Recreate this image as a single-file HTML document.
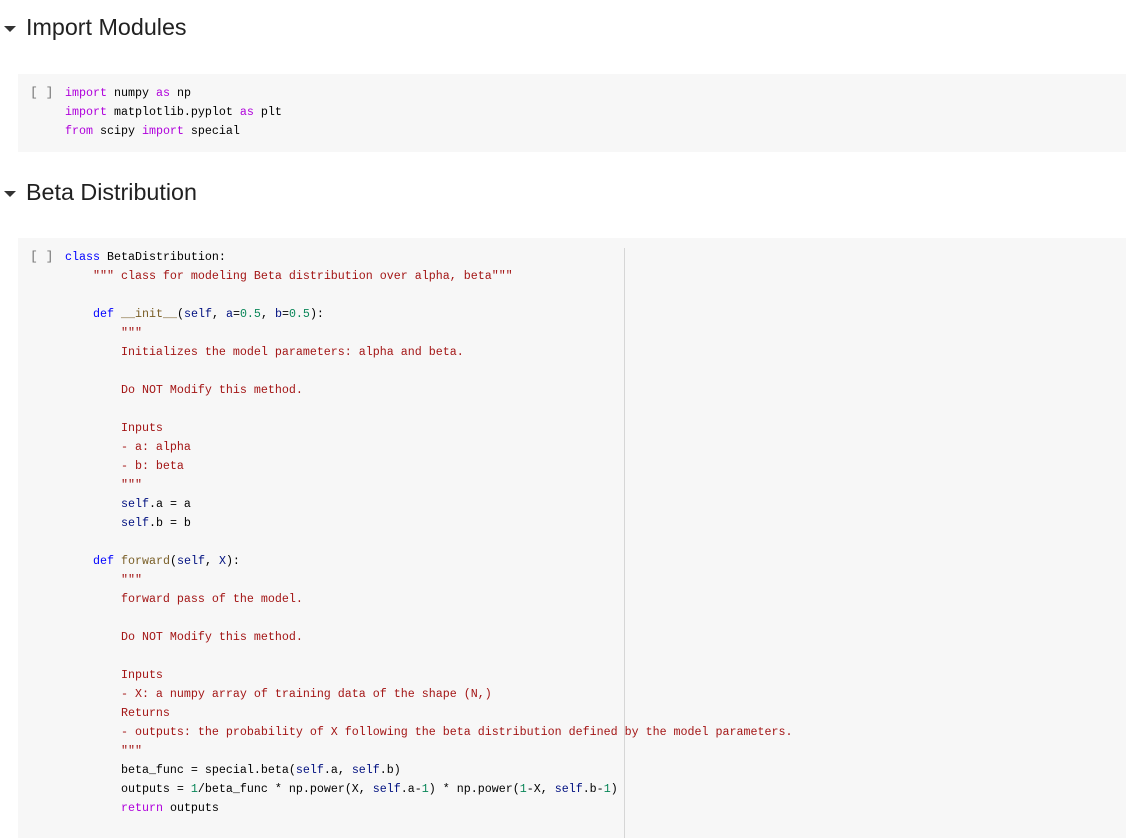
<!DOCTYPE html>
<html><head><style>
body{margin:0;width:1126px;height:831px;overflow:hidden;background:#fff;font-family:"Liberation Sans",sans-serif;}
.h{position:absolute;left:0;font-size:23.3px;color:#212121;}
.h .t{position:absolute;left:4px;top:12px;width:0;height:0;border-left:6px solid transparent;border-right:6px solid transparent;border-top:6px solid #333;}
.h span{position:absolute;left:26px;top:0;white-space:nowrap;}
.cell{position:absolute;left:18px;right:0;background:#f7f7f7;}
.br{position:absolute;left:12px;color:#757575;font:13px "Liberation Mono",monospace;}
pre{position:absolute;left:47px;margin:0;font:11.67px/19px "Liberation Mono",monospace;color:#000;}
.k{color:#af00db}.b{color:#0000ff}.s{color:#a31515}.f{color:#795e26}.v{color:#001080}.n{color:#098658}
.rule{position:absolute;left:606px;top:10px;bottom:0;width:1px;background:#d6d6d6;}
</style></head><body>
<div class="h" style="top:14px"><div class="t"></div><span>Import Modules</span></div>
<div class="cell" style="top:74px;height:78px">
<div class="br" style="top:11px">[ ]</div>
<pre style="top:10px"><span class="k">import</span> numpy <span class="k">as</span> np
<span class="k">import</span> matplotlib.pyplot <span class="k">as</span> plt
<span class="k">from</span> scipy <span class="k">import</span> special</pre>
</div>
<div class="h" style="top:179px"><div class="t"></div><span>Beta Distribution</span></div>
<div class="cell" style="top:238px;height:600px">
<div class="br" style="top:11px">[ ]</div>
<div class="rule"></div>
<pre style="top:10px"><span class="b">class</span> BetaDistribution:
    <span class="s">""" class for modeling Beta distribution over alpha, beta"""</span>

    <span class="b">def</span> <span class="f">__init__</span>(<span class="v">self</span>, <span class="v">a</span>=<span class="n">0.5</span>, <span class="v">b</span>=<span class="n">0.5</span>):
        <span class="s">"""
        Initializes the model parameters: alpha and beta.

        Do NOT Modify this method.

        Inputs
        - a: alpha
        - b: beta
        """</span>
        <span class="v">self</span>.a = a
        <span class="v">self</span>.b = b

    <span class="b">def</span> <span class="f">forward</span>(<span class="v">self</span>, <span class="v">X</span>):
        <span class="s">"""
        forward pass of the model.

        Do NOT Modify this method.

        Inputs
        - X: a numpy array of training data of the shape (N,)
        Returns
        - outputs: the probability of X following the beta distribution defined by the model parameters.
        """</span>
        beta_func = special.beta(<span class="v">self</span>.a, <span class="v">self</span>.b)
        outputs = <span class="n">1</span>/beta_func * np.power(X, <span class="v">self</span>.a-<span class="n">1</span>) * np.power(<span class="n">1</span>-X, <span class="v">self</span>.b-<span class="n">1</span>)
        <span class="k">return</span> outputs</pre>
</div>
</body></html>
